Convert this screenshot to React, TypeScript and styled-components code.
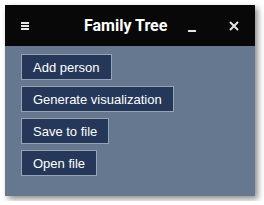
import React from 'react'
import styled, { createGlobalStyle } from 'styled-components'

const Global = createGlobalStyle`
body {
  margin: 0;
  background: #ffffff;
  font-family: "Liberation Sans", Arial, sans-serif;
}
`

const Window = styled.div`
  margin: 5px;
  width: 250px;
  height: 191px;
  background: #667790;
  box-shadow: 3px 3px 6px rgba(0, 0, 0, 0.45);
  display: flex;
  flex-direction: column;
`

const TitleBar = styled.div`
  height: 41px;
  background: #080808;
  display: flex;
  align-items: center;
  padding: 0 16px 0 16px;
  color: #ffffff;
`

const Title = styled.div`
  margin-left: 55px;
  flex: 1;
  font-family: Roboto, "Liberation Sans", sans-serif;
  font-weight: 700;
  font-size: 16px;
  color: #ffffff;
`

const IconBox = styled.div<{ $gap?: number }>`
  display: flex;
  align-items: center;
  margin-left: ${(p) => p.$gap ?? 0}px;
`

const Body = styled.div`
  padding: 8px 16px;
  display: flex;
  flex-direction: column;
  align-items: flex-start;
  gap: 6px;
`

const Button = styled.button`
  height: 26px;
  padding: 0 11px;
  background: #253859;
  border: 1px solid #97a3b6;
  color: #ffffff;
  font-family: "Liberation Sans", Arial, sans-serif;
  font-size: 13px;
  cursor: pointer;
`

const App = () => {
  return (
    <>
      <Global />
      <Window>
        <TitleBar>
          <IconBox>
            <svg width="8" height="8" viewBox="0 0 8 8">
              <rect x="0" y="0" width="8" height="2" fill="#e6e6e6" />
              <rect x="0" y="3" width="8" height="2" fill="#e6e6e6" />
              <rect x="0" y="6" width="8" height="2" fill="#e6e6e6" />
            </svg>
          </IconBox>
          <Title>Family Tree</Title>
          <IconBox>
            <svg width="8" height="16" viewBox="0 0 8 16">
              <rect x="0" y="12" width="8" height="2" fill="#e6e6e6" />
            </svg>
          </IconBox>
          <IconBox $gap={33}>
            <svg width="10" height="10" viewBox="0 0 10 10">
              <path d="M1 1 L9 9 M9 1 L1 9" stroke="#e6e6e6" strokeWidth="2" />
            </svg>
          </IconBox>
        </TitleBar>
        <Body>
          <Button>Add person</Button>
          <Button>Generate visualization</Button>
          <Button>Save to file</Button>
          <Button>Open file</Button>
        </Body>
      </Window>
    </>
  )
}

export default App
